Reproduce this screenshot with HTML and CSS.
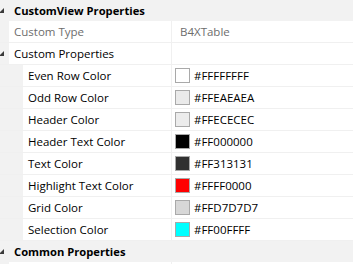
FILE: index.html
```html
<!DOCTYPE html>
<html>
<head>
<meta charset="utf-8">
<link rel="stylesheet" href="styles.css">
</head>
<body>
<div class="grid">
  <div class="row cat">
    <div class="gutter"><span class="tri"></span></div>
    <div class="cat-label">CustomView Properties</div>
  </div>
  <div class="row">
    <div class="gutter"></div>
    <div class="cell name muted">Custom Type</div>
    <div class="cell val muted">B4XTable</div>
  </div>
  <div class="row">
    <div class="gutter"><span class="tri"></span></div>
    <div class="cell name">Custom Properties</div>
    <div class="cell val"></div>
  </div>
  <div class="row sub">
    <div class="gutter"></div>
    <div class="cell name">Even Row Color</div>
    <div class="cell val"><span class="sw" style="background:#FFFFFF"></span>#FFFFFFFF</div>
  </div>
  <div class="row sub">
    <div class="gutter"></div>
    <div class="cell name">Odd Row Color</div>
    <div class="cell val"><span class="sw" style="background:#EAEAEA"></span>#FFEAEAEA</div>
  </div>
  <div class="row sub">
    <div class="gutter"></div>
    <div class="cell name">Header Color</div>
    <div class="cell val"><span class="sw" style="background:#ECECEC"></span>#FFECECEC</div>
  </div>
  <div class="row sub">
    <div class="gutter"></div>
    <div class="cell name">Header Text Color</div>
    <div class="cell val"><span class="sw" style="background:#000000"></span>#FF000000</div>
  </div>
  <div class="row sub">
    <div class="gutter"></div>
    <div class="cell name">Text Color</div>
    <div class="cell val"><span class="sw" style="background:#313131"></span>#FF313131</div>
  </div>
  <div class="row sub">
    <div class="gutter"></div>
    <div class="cell name">Highlight Text Color</div>
    <div class="cell val"><span class="sw" style="background:#FF0000"></span>#FFFF0000</div>
  </div>
  <div class="row sub">
    <div class="gutter"></div>
    <div class="cell name">Grid Color</div>
    <div class="cell val"><span class="sw" style="background:#D7D7D7"></span>#FFD7D7D7</div>
  </div>
  <div class="row sub">
    <div class="gutter"></div>
    <div class="cell name">Selection Color</div>
    <div class="cell val"><span class="sw" style="background:#00FFFF"></span>#FF00FFFF</div>
  </div>
  <div class="row cat">
    <div class="gutter"><span class="tri"></span></div>
    <div class="cat-label">Common Properties</div>
  </div>
  <div class="row tail">
    <div class="gutter"></div>
    <div class="cell name"></div>
    <div class="cell val"></div>
  </div>
</div>
</body>
</html>
```
FILE: styles.css
```css
html, body {
  margin: 0;
  padding: 0;
  background: #f2f2f2;
}
body {
  width: 353px;
  height: 264px;
  overflow: hidden;
  font-family: "Open Sans", "Noto Sans", sans-serif;
  font-size: 11.5px;
  color: #000;
}
.grid {
  display: flex;
  flex-direction: column;
  height: 264px;
  overflow: hidden;
}
.row {
  display: flex;
  flex: none;
  height: 21px;
  border-bottom: 1px solid #f0f0f0;
  background: #fff;
}
.gutter {
  width: 9px;
  flex: none;
  background: #f2f2f2;
  position: relative;
}
.sub .gutter {
  width: 23px;
}
.tri {
  position: absolute;
  left: -1px;
  top: 8px;
  width: 0;
  height: 0;
  border-style: solid;
  border-width: 0 0 5px 5px;
  border-color: transparent transparent #3a3a3a transparent;
}
.cat {
  background: #f2f2f2;
  border-bottom: none;
}
.cat-label {
  font-weight: bold;
  font-size: 11.2px;
  padding-left: 5px;
  line-height: 21px;
}
.tail {
  height: 2px;
  border-bottom: none;
}
.cell {
  line-height: 21px;
  white-space: nowrap;
  display: flex;
  align-items: center;
}
.name {
  width: 163px;
  flex: none;
  padding-left: 5px;
  box-sizing: border-box;
  border-right: 1px solid #f0f0f0;
}
.sub .name {
  width: 149px;
}
.val {
  flex: 1;
  padding-left: 8px;
}
.sub .val {
  padding-left: 3px;
}
.muted {
  color: #6d6d6d;
}
.sw {
  width: 13px;
  height: 13px;
  border: 1px solid #a9a9a9;
  margin-right: 4px;
  flex: none;
}
```
